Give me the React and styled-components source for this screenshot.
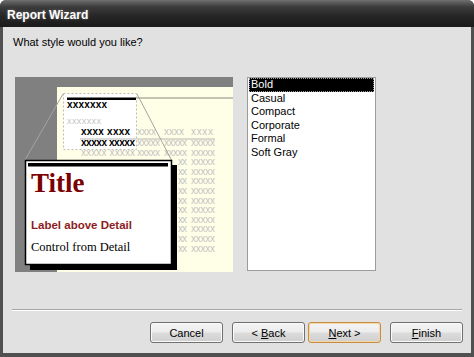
import React from 'react';
import styled, { createGlobalStyle } from 'styled-components';

const GlobalStyle = createGlobalStyle`
  html, body {
    margin: 0;
    padding: 0;
    background: #ffffff;
  }
  body {
    font-family: "Liberation Sans", Arial, sans-serif;
  }
`

const Window = styled.div`
    width: 474px;
    height: 357px;
    box-sizing: border-box;
    display: flex;
    flex-direction: column;
    padding: 0 3px 4px;
    background: #505050;
    border-radius: 6px 6px 0 0;
    overflow: hidden;
`
const TitleBar = styled.div`
    flex: none;
    height: 27px;
    margin: 0 -3px;
    padding: 2px 7px 0;
    box-sizing: border-box;
    display: flex;
    align-items: center;
    background: linear-gradient(#707070 0, #3c3c3c 25%, #262626 60%, #1a1a1a 100%);
    color: #ffffff;
    font-size: 12px;
    font-weight: bold;
    text-shadow: 0 0 3px rgba(255, 255, 255, 0.35);
`
const Client = styled.div`
    flex: 1;
    display: flex;
    flex-direction: column;
    background: #e1e1e1;
    color: #000000;
    font-size: 11px;
    line-height: 14px;
`
const Question = styled.div`
    margin: 8px 0 0 10px;
    height: 14px;
`
const MainRow = styled.div`
    display: flex;
    align-items: flex-start;
    gap: 14px;
    margin: 28px 0 0 12px;
`
const Preview = styled.div`
    width: 218px;
    height: 195px;
    flex: none;
    svg {
        display: block;
    }
`
const StyleList = styled.ul`
    width: 129px;
    height: 194px;
    box-sizing: border-box;
    margin: 0;
    padding: 0;
    list-style: none;
    background: #ffffff;
    border: 1px solid #9c9c9c;
`
const StyleItem = styled.li`
    height: 13.6px;
    line-height: 13.6px;
    padding-left: 2px;
    margin: 0 1px;
    background: ${p => p.$selected ? '#000000' : 'transparent'};
    color: ${p => p.$selected ? '#ffffff' : '#000000'};
    outline: ${p => p.$selected ? '1px dotted #9a9a9a' : 'none'};
    outline-offset: -1px;
`
const Separator = styled.div`
    margin: 37px 9px 0;
    height: 1px;
    background: #a6a6a6;
    border-bottom: 1px solid #ffffff;
`
const ButtonRow = styled.div`
    display: flex;
    justify-content: flex-end;
    margin: 11px 8px 0 0;
`
const Button = styled.button`
    width: 73px;
    height: 21px;
    margin-left: ${p => p.$gap || 0}px;
    padding: 0;
    box-sizing: border-box;
    font-family: "Liberation Sans", Arial, sans-serif;
    font-size: 11px;
    color: #000000;
    border: 1px solid ${p => p.$default ? '#c98b3f' : '#707070'};
    border-radius: 3px;
    background: linear-gradient(#f4f4f4 0, #ececec 48%, #dcdcdc 52%, #cfcfcf 100%);
    box-shadow: inset 0 0 0 1px ${p => p.$default ? '#f3d9a8' : '#fafafa'};
    u {
        text-decoration: underline;
        text-underline-offset: 1px;
    }
`

// rows of the detail section; below y=160 the zoom popup hides the left columns
const detailRows = [155.6, 165.2, 174.8, 184.4, 194, 203.6, 213.2, 222.8, 232.4, 242, 251.6]
const xFont = { fontFamily: 'Liberation Sans, Arial, sans-serif', fontSize: 10 }
const gray = '#c4c4c4'

const GrayCols = ({ y, word, widths }) => (
    <>
        <text x="137" y={y} textLength={widths[0]} fill={gray} {...xFont}>{word}</text>
        <text x="164" y={y} textLength={widths[1]} fill={gray} {...xFont}>{word}</text>
        <text x="191" y={y} textLength={widths[2]} fill={gray} {...xFont}>{word}</text>
    </>
)

const DetailRow = ({ y }) => y < 160 ? (
    <>
        <text x="81" y={y} textLength="54" fill={gray} {...xFont}>xxxxx xxxxx</text>
        <GrayCols y={y} word="xxxxx" widths={[23, 23, 24]} />
    </>
) : (
    <>
        <text x="178" y={y} textLength="9" fill={gray} {...xFont}>xx</text>
        <text x="191" y={y} textLength="24" fill={gray} {...xFont}>xxxxx</text>
    </>
)

const ReportPreview = () => (
    <svg width="218" height="195" viewBox="15 77 218 195">
        <rect x="15" y="77" width="218" height="195" fill="#808080" />
        <rect x="57" y="87" width="176" height="185" fill="#fffee6" />
        <line x1="137" y1="98" x2="233" y2="98" stroke="#c4c4b4" strokeWidth="2" />

        <GrayCols y={135} word="xxxx" widths={[19, 20, 22]} />
        <line x1="80" y1="139" x2="215" y2="139" stroke="#b4b4b4" strokeWidth="1" />
        <GrayCols y={146} word="xxxxx" widths={[23, 23, 24]} />
        {detailRows.map(y => <DetailRow key={y} y={y} />)}

        <rect x="63.5" y="93.5" width="73" height="56" fill="#ffffff" stroke="#bcbcbc" strokeDasharray="2 2" />
        <rect x="67" y="97.5" width="69" height="2.5" fill="#000000" />
        <text x="67" y="108" textLength="40" fontWeight="bold" fill="#000" {...xFont}>xxxxxxx</text>
        <text x="67" y="124" textLength="34" fill={gray} {...xFont} fontSize="9">xxxxxxx</text>
        <text x="81" y="135" textLength="49" fontWeight="bold" fill="#000" {...xFont}>xxxx xxxx</text>
        <line x1="80" y1="139" x2="136" y2="139" stroke="#b4b4b4" strokeWidth="1" />
        <text x="81" y="146" textLength="54" fontWeight="bold" fill="#000" {...xFont}>xxxxx xxxxx</text>

        <line x1="63" y1="94" x2="25" y2="160" stroke="#a4a4a4" strokeWidth="1" />
        <line x1="137" y1="94" x2="172" y2="161" stroke="#a4a4a4" strokeWidth="1" />

        <rect x="30" y="165" width="147" height="105" fill="#000000" />
        <rect x="25.5" y="160.5" width="146" height="104" fill="#ffffff" stroke="#000000" strokeWidth="1.5" />
        <rect x="28" y="163" width="140" height="3.5" fill="#000000" />
        <text x="31" y="192" fill="#7b0000" fontFamily="Liberation Serif, Times New Roman, serif" fontWeight="bold" fontSize="27">Title</text>
        <text x="31" y="229" fill="#8e1b22" fontFamily="Liberation Sans, Arial, sans-serif" fontWeight="bold" fontSize="11.5">Label above Detail</text>
        <text x="31" y="251" fill="#000000" fontFamily="Liberation Serif, Times New Roman, serif" fontSize="12.5">Control from Detail</text>
    </svg>
)

const styles = ['Bold', 'Casual', 'Compact', 'Corporate', 'Formal', 'Soft Gray']

export default function App() {
    return (
        <>
            <GlobalStyle />
            <Window>
                <TitleBar>Report Wizard</TitleBar>
                <Client>
                    <Question>What style would you like?</Question>
                    <MainRow>
                        <Preview>
                            <ReportPreview />
                        </Preview>
                        <StyleList>
                            {styles.map((s, i) => (
                                <StyleItem key={s} $selected={i === 0}>{s}</StyleItem>
                            ))}
                        </StyleList>
                    </MainRow>
                    <Separator />
                    <ButtonRow>
                        <Button>Cancel</Button>
                        <Button $gap={9}>&lt; <u>B</u>ack</Button>
                        <Button $gap={3} $default><u>N</u>ext &gt;</Button>
                        <Button $gap={9}><u>F</u>inish</Button>
                    </ButtonRow>
                </Client>
            </Window>
        </>
    );
}
